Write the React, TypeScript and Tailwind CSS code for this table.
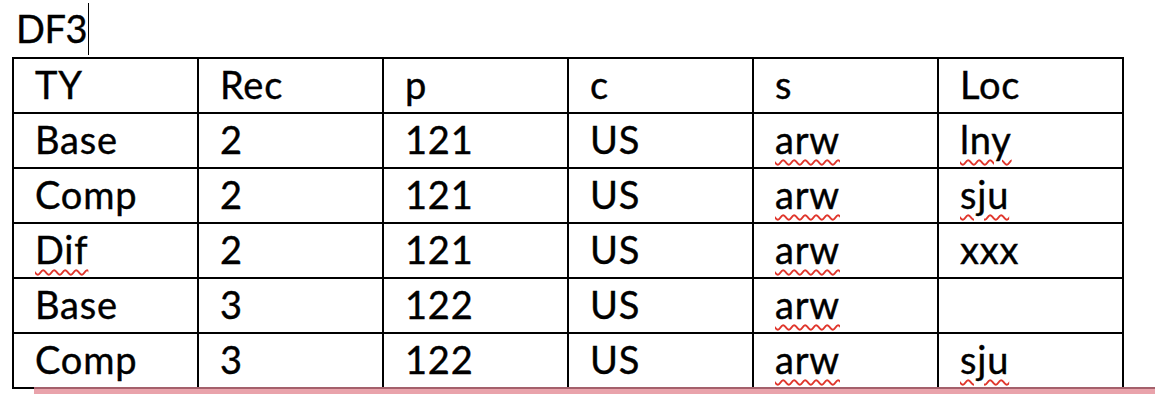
import React from 'react';

const header = ['TY', 'Rec', 'p', 'c', 's', 'Loc'];

// [text, squiggle?]
const rows: [string, boolean][][] = [
    [['Base', false], ['2', false], ['121', false], ['US', false], ['arw', true], ['lny', true]],
    [['Comp', false], ['2', false], ['121', false], ['US', false], ['arw', true], ['sju', true]],
    [['Dif', true], ['2', false], ['121', false], ['US', false], ['arw', true], ['xxx', false]],
    [['Base', false], ['3', false], ['122', false], ['US', false], ['arw', true], ['', false]],
    [['Comp', false], ['3', false], ['122', false], ['US', false], ['arw', true], ['sju', true]],
];

function Cell({ text, wavy }: { text: string; wavy?: boolean }) {
    return (
        <div className="h-[55px] border-r-2 border-b-2 border-black pl-[21px] pt-[3px] leading-[1.2]">
            <span
                className={
                    wavy
                        ? 'underline decoration-wavy decoration-[#e0362c] decoration-[1.6px] underline-offset-[5px]'
                        : ''
                }
            >
                {text}
            </span>
        </div>
    );
}

export default function App() {
    return (
        <div
            className="relative w-[1158px] h-[414px] bg-white text-black text-[38px] tracking-[0.8px] [-webkit-text-stroke:0.4px_black]"
            style={{ fontFamily: 'Lato, "Open Sans", sans-serif' }}
        >
            <div className="flex items-start h-[57px] pl-[16px]">
                <span className="pt-[6px] leading-[1.2] tracking-[-0.5px]">DF3</span>
                <div className="ml-[1px] mt-[3px] w-[1.5px] h-[52px] bg-black" />
            </div>

            <div className="ml-[12px] w-[1112px] grid grid-cols-[repeat(6,185px)] border-l-2 border-t-2 border-black">
                {header.map((h) => (
                    <Cell key={h} text={h} />
                ))}
                {rows.map((r, i) =>
                    r.map(([t, w], j) => <Cell key={`${i}-${j}`} text={t} wavy={w} />)
                )}
            </div>

            {/* pink selection bar under the table */}
            <div className="absolute left-[34px] top-[387px] w-[1121px] h-[7px] bg-[#e9a3ab] border-t-2 border-[#a4606b]" />
        </div>
    );
}
